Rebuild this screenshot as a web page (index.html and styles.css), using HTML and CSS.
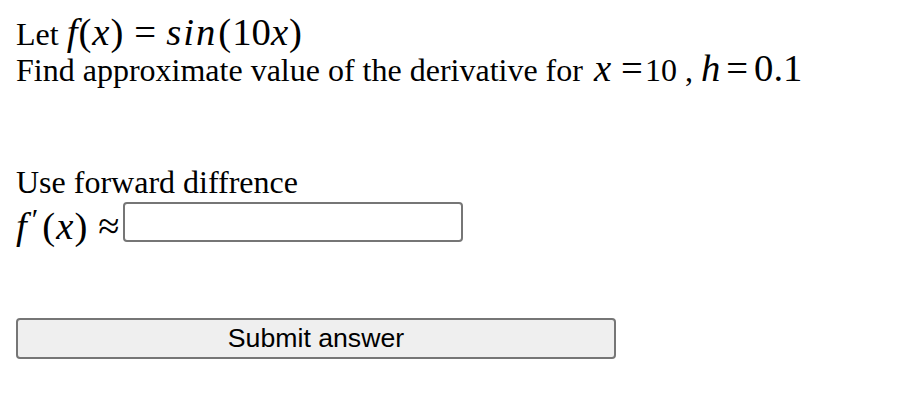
FILE: index.html
```html
<!DOCTYPE html>
<html>
<head>
<meta charset="utf-8">
<link rel="stylesheet" href="styles.css">
</head>
<body>
<div class="page">
  <div class="block">
    <div class="line">Let <span class="m"><i>f</i><span class="p">(</span><i>x</i><span class="p">)</span><span class="rel">=</span><i class="sin">sin</i><span class="p">(</span>10<i>x</i><span class="p">)</span></span></div>
    <div class="line">Find approximate value of the derivative for <span class="m lead"><i>x</i><span class="rel rel-left">=</span></span>10 , <span class="m"><i>h</i><span class="rel tight">=</span>0.1</span></div>
  </div>
  <div class="block second">
    <div class="line">Use forward diffrence</div>
    <div class="line answer"><span class="m"><i>f</i><span class="prime">′</span><span class="p">(</span><i>x</i><span class="p">)</span><span class="rel approx">≈</span></span><input class="field" type="text"></div>
  </div>
  <button class="submit" type="button">Submit answer</button>
</div>
</body>
</html>
```

FILE: styles.css
```css
html, body {
  margin: 0;
  padding: 0;
  background: #ffffff;
}

.page {
  padding: 16px;
  font-family: "Liberation Serif", "Times New Roman", serif;
  font-size: 32px;
  color: #000;
  display: flex;
  flex-direction: column;
  align-items: flex-start;
}

.block {
  display: flex;
  flex-direction: column;
}

.line {
  line-height: 36px;
  white-space: nowrap;
}

.second {
  margin-top: 76px;
}

.m {
  font-size: 38.7px;
  line-height: 0;
}

.m i {
  font-style: italic;
  font-family: "Liberation Serif", serif;
}

.m .sin {
  letter-spacing: 2px;
}

.lead {
  margin-left: 3px;
}

.p {
  padding: 0 1px;
}

.rel {
  padding: 0 10px;
}

.rel-left {
  padding-right: 2px;
}

.tight {
  padding: 0 6px;
}

.prime {
  font-size: 30px;
  vertical-align: 10px;
  padding: 0 3px 0 5px;
}

.answer {
  display: flex;
  align-items: center;
  height: 44px;
}

.approx {
  padding-right: 0;
}

.field {
  box-sizing: border-box;
  width: 340px;
  height: 40px;
  margin: 0;
  margin-left: 3px;
  border: 2px solid #767676;
  border-radius: 4px;
  background: #fff;
  padding: 2px 4px;
  font-size: 26px;
}

.submit {
  box-sizing: border-box;
  width: 600px;
  height: 41px;
  margin-top: 74px;
  border: 2px solid #767676;
  border-radius: 4px;
  background: #efefef;
  font-family: "Liberation Sans", Arial, sans-serif;
  font-size: 26.67px;
  color: #000;
  padding: 0;
}
```
